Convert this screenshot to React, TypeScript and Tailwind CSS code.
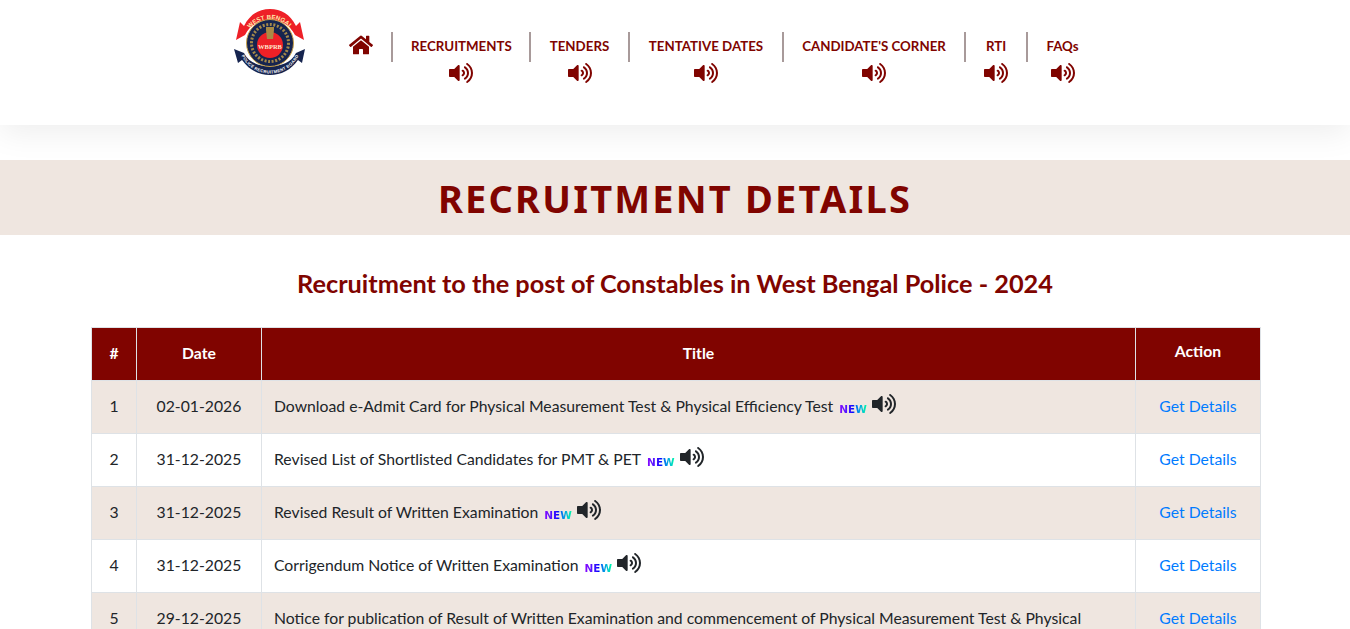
import React from "react";
import { FaHome, FaVolumeUp } from "react-icons/fa";

const navItems = [
  { label: "RECRUITMENTS", width: "w-[100px]" },
  { label: "TENDERS", width: "w-[61px]" },
  { label: "TENTATIVE DATES", width: "w-[116px]" },
  { label: "CANDIDATE'S CORNER", width: "w-[144px]" },
  { label: "RTI", width: "w-[21px]" },
  { label: "FAQs", width: "w-[33px]" },
];

const rows = [
  { id: 1, date: "02-01-2026", title: "Download e-Admit Card for Physical Measurement Test & Physical Efficiency Test", tag: true },
  { id: 2, date: "31-12-2025", title: "Revised List of Shortlisted Candidates for PMT & PET", tag: true },
  { id: 3, date: "31-12-2025", title: "Revised Result of Written Examination", tag: true },
  { id: 4, date: "31-12-2025", title: "Corrigendum Notice of Written Examination", tag: true },
  {
    id: 5,
    date: "29-12-2025",
    title: "Notice for publication of Result of Written Examination and commencement of Physical Measurement Test & Physical Efficiency Test",
    tag: false,
  },
];

function Logo() {
  return (
    <svg width="72" height="68" viewBox="0 0 72 68" className="block">
      <defs>
        <path id="logo-top" d="M11 30 A26 26 0 0 1 61 30" />
        <path id="logo-bottom" d="M9 44 A29 29 0 0 0 63 44" />
      </defs>
      {/* red banner */}
      <path d="M2 32 L6 14 L10 18 C16 6 25 1 36 1 C47 1 56 6 62 18 L66 14 L70 32 L61 27 C56 17 47 12 36 12 C25 12 16 17 11 27 Z" fill="#ee2027" />
      {/* navy banner */}
      <path d="M0 41 L10 45 C15 55 25 58 36 58 C47 58 57 55 62 45 L71 41 L68 55 L64 52 C57 62 47 67 36 67 C25 67 15 62 8 52 L4 55 Z" fill="#16244f" />
      <text fontFamily="Liberation Sans, sans-serif" fontSize="6.2" fontWeight="700" fill="#ffe9a8" textAnchor="middle">
        <textPath href="#logo-top" startOffset="50%">WEST BENGAL</textPath>
      </text>
      <text fontFamily="Liberation Sans, sans-serif" fontSize="4.2" fontWeight="700" fill="#ffffff" textAnchor="middle" dominantBaseline="hanging">
        <textPath href="#logo-bottom" startOffset="50%">POLICE RECRUITMENT BOARD</textPath>
      </text>
      <circle cx="36" cy="35" r="23.5" fill="#16244f" stroke="#c9a24a" strokeWidth="1" />
      <circle cx="36" cy="35" r="18.5" fill="none" stroke="#a5894a" strokeWidth="3" strokeDasharray="2 1.6" />
      <circle cx="36" cy="37" r="13" fill="#ee2027" />
      <path d="M32 19 h8 v3 l-1 9 h-6 l-1 -9 Z" fill="#a98a45" />
      <text x="36" y="41" fontFamily="Liberation Serif, serif" fontSize="6.5" fontWeight="700" fill="#ffe9d0" textAnchor="middle">WBPRB</text>
    </svg>
  );
}

function NewBadge() {
  return (
    <span className="relative -top-[1px] ml-[6px] inline-block bg-gradient-to-r from-[#8a00ff] via-[#0000ff] to-[#00ffa0] bg-clip-text align-[-2px] font-['DejaVu_Sans',sans-serif] text-[10.5px] leading-none font-bold text-transparent">
      NEW
    </span>
  );
}

export default function App() {
  return (
    <div className="h-[629px] overflow-hidden bg-white font-['Lato','Noto_Sans',sans-serif] text-[#212529]">
      <header className="flex h-[125px] pl-[234px] shadow-[0_8px_30px_rgba(0,0,0,0.07)]">
        <div className="w-[72px] pt-[8px]">
          <Logo />
        </div>
        <nav className="ml-[40px] flex items-start pt-[32px]">
          <a className="flex h-[30px] w-[45px] items-start pl-[3px] pt-px text-[#800400]">
            <FaHome size={24} />
          </a>
          {navItems.map((item) => (
            <div key={item.label} className="flex h-[30px] flex-col items-center border-l-2 border-[#a89a9a] px-[18px]">
              <span className={`${item.width} pt-[4px] text-center text-[13.3px] leading-[20px] font-bold whitespace-nowrap text-[#800400]`}>{item.label}</span>
              <FaVolumeUp size={24} className="mt-[5px] shrink-0 text-[#800400]" />
            </div>
          ))}
        </nav>
      </header>

      <div className="mt-[35px] flex h-[75px] items-center justify-center bg-[#efe6e0]">
        <h1 className="font-['Noto_Sans',sans-serif] text-[38px] leading-none font-bold tracking-[2.2px] text-[#800400]">RECRUITMENT DETAILS</h1>
      </div>

      <h2 className="mt-[33px] text-center text-[25.3px] leading-[30px] font-bold text-[#800400]">
        Recruitment to the post of Constables in West Bengal Police - 2024
      </h2>

      <div className="mx-[91px] mt-[29px]">
        <table className="w-[1170px] table-fixed border-collapse text-[15.75px]">
          <colgroup>
            <col className="w-[45px]" />
            <col className="w-[125px]" />
            <col />
            <col className="w-[125px]" />
          </colgroup>
          <thead className="bg-[#800400] text-white">
            <tr className="h-[53px]">
              <th className="border border-[#dee2e6] pb-[3px] font-bold">#</th>
              <th className="border border-[#dee2e6] pb-[3px] font-bold">Date</th>
              <th className="border border-[#dee2e6] pb-[3px] font-bold">Title</th>
              <th className="border border-[#dee2e6] pb-[6px] font-bold">Action</th>
            </tr>
          </thead>
          <tbody>
            {rows.map((row) => (
              <tr key={row.id} className={row.id % 2 === 1 ? "h-[53px] bg-[#efe6e0]" : "h-[53px] bg-white"}>
                <td className="border border-[#dee2e6] pt-[13px] text-center align-top leading-[24px]">{row.id}</td>
                <td className="border border-[#dee2e6] pt-[13px] text-center align-top leading-[24px]">{row.date}</td>
                <td className="border border-[#dee2e6] px-[12px] pt-[13px] align-top leading-[24px]">
                  {row.title}
                  {row.tag && (
                    <>
                      <NewBadge />
                      <FaVolumeUp size={24} className="relative -top-[7px] -my-[8px] ml-[5px] inline-block align-[-3px] text-[#212529]" />
                    </>
                  )}
                </td>
                <td className="border border-[#dee2e6] pt-[13px] text-center align-top leading-[24px] text-[#007bff]">Get Details</td>
              </tr>
            ))}
          </tbody>
        </table>
      </div>
    </div>
  );
}
